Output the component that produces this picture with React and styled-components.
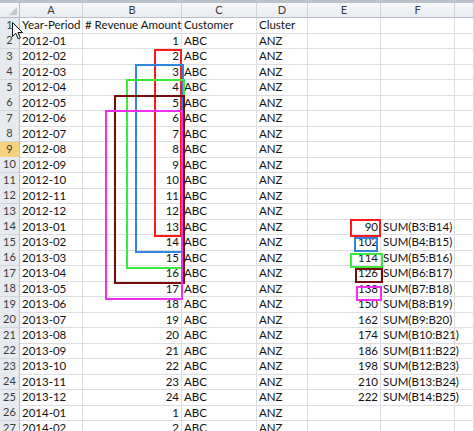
import React from 'react'
import styled, { createGlobalStyle } from 'styled-components'

const cols = ['A', 'B', 'C', 'D', 'E', 'F', '']
const track = '20px 63px 99px 75px 51px 73px 74px 19px'

const rows = [['Year-Period', '# Revenue Amount', 'Customer', 'Cluster', '', '']]
for (let i = 0; i < 26; i++) {
    const year = 2012 + Math.floor(i / 12)
    const month = String((i % 12) + 1).padStart(2, '0')
    const value = (i % 24) + 1
    let e = ''
    let f = ''
    if (i >= 12 && i < 24) {
        // running 12 month sum, like the formula in column F says
        e = String(90 + (i - 12) * 12)
        f = `SUM(B${i - 9}:B${i + 2})`
    }
    rows.push([`${year}-${month}`, String(value), 'ABC', 'ANZ', e, f])
}

// coloured frames drawn over the sheet
const frames = [
    { color: '#ff1a1a', x: 154, y: 49, w: 28, h: 188 },
    { color: '#2e86e0', x: 135, y: 64, w: 49, h: 189 },
    { color: '#3ce83c', x: 126, y: 79, w: 59, h: 190 },
    { color: '#7a0a0a', x: 114, y: 95, w: 71, h: 189 },
    { color: '#f02ef0', x: 105, y: 110, w: 78, h: 190 },
    { color: '#ff1a1a', x: 350, y: 219, w: 31, h: 18 },
    { color: '#2e86e0', x: 354, y: 237, w: 24, h: 15 },
    { color: '#3ce83c', x: 350, y: 253, w: 33, h: 15 },
    { color: '#7a0a0a', x: 355, y: 268, w: 28, h: 15 },
    { color: '#f02ef0', x: 356, y: 286, w: 26, h: 15 },
]

function App() {
    return (
        <>
            <GlobalStyle />
            <Sheet>
                <TopStrip />
                <HeaderRow>
                    <Corner>
                        <svg width="8" height="8" viewBox="0 0 8 8">
                            <path d="M8 0 L8 8 L0 8 Z" fill="#c3c8cf" />
                        </svg>
                    </Corner>
                    {cols.map((c, i) => (
                        <ColHead key={i}>{c}</ColHead>
                    ))}
                </HeaderRow>
                {rows.map((r, i) => (
                    <Row key={i}>
                        <RowHead $active={i + 1 === 9}>{i + 1}</RowHead>
                        <Cell>{r[0]}</Cell>
                        <Cell $right={i > 0}>{r[1]}</Cell>
                        <Cell>{r[2]}</Cell>
                        <Cell>{r[3]}</Cell>
                        <Cell $right>{r[4]}</Cell>
                        <Cell>{r[5]}</Cell>
                        <Cell />
                        <Cell />
                    </Row>
                ))}
                {frames.map((f, i) => (
                    <Frame key={i} $color={f.color} style={{ left: f.x, top: f.y, width: f.w, height: f.h }} />
                ))}
                <Pointer width="12" height="18" viewBox="0 0 12 18">
                    <path d="M0.5 0.5 L0.5 14.5 L3.8 11.3 L6.2 16.8 L8.3 15.9 L6 10.5 L10.6 10.5 Z" fill="#fff" stroke="#111" strokeWidth="1" strokeLinejoin="round" />
                </Pointer>
            </Sheet>
        </>
    )
}

export default App

const GlobalStyle = createGlobalStyle`
body{
    margin: 0;
    background: #fff;
    overflow: hidden;
}
`

const Sheet = styled.div`
    position: relative;
    width: 474px;
    height: 431px;
    overflow: hidden;
    background: #fff;
    font-family: Lato, "Liberation Sans", sans-serif;
    font-size: 11.5px;
    color: #111;
`

const TopStrip = styled.div`
    height: 3px;
    background: #bcc2cb;
`

const HeaderRow = styled.div`
    display: grid;
    grid-template-columns: ${track};
    height: 14.5px;
    background: linear-gradient(#f6f7f9, #e9ecf0);
    border-bottom: 1px solid #b9bfc8;
    box-sizing: border-box;
`

const Corner = styled.div`
    display: flex;
    align-items: flex-end;
    justify-content: flex-end;
    padding: 0 2px 2px 0;
    border-right: 1px solid #b9bfc8;
`

const ColHead = styled.div`
    display: flex;
    align-items: center;
    justify-content: center;
    border-right: 1px solid #cdd2d9;
    color: #3a3a3a;
    font-size: 11px;
`

const Row = styled.div`
    display: grid;
    grid-template-columns: ${track};
    height: 15.53px;
`

const RowHead = styled.div`
    display: flex;
    align-items: flex-end;
    justify-content: center;
    padding-bottom: 2px;
    box-sizing: border-box;
    background: ${p => (p.$active ? '#f7d27e' : '#e7eaee')};
    border-right: 1px solid #b9bfc8;
    border-bottom: 1px solid ${p => (p.$active ? '#e2b65a' : '#d3d7dd')};
    color: #3c3c3c;
    font-size: 11px;
`

const Cell = styled.div`
    display: flex;
    align-items: flex-end;
    justify-content: ${p => (p.$right ? 'flex-end' : 'flex-start')};
    padding: 0 2px 2px 2px;
    box-sizing: border-box;
    border-right: 1px solid #dcdee0;
    border-bottom: 1px solid #dcdee0;
    white-space: nowrap;
    overflow: visible;
    line-height: 1;
`

const Frame = styled.div`
    position: absolute;
    box-sizing: border-box;
    border: 2px solid ${p => p.$color};
    pointer-events: none;
`

const Pointer = styled.svg`
    position: absolute;
    left: 12px;
    top: 22px;
`
